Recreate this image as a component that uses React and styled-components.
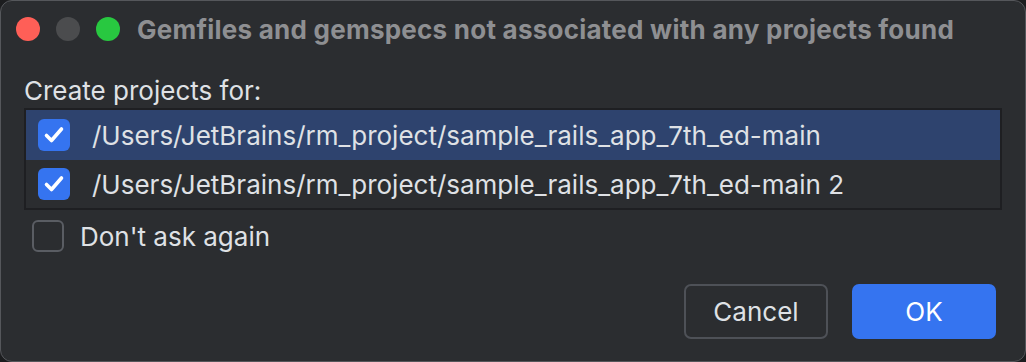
import React, { useState } from 'react'
import styled, { createGlobalStyle } from 'styled-components'

const GlobalStyle = createGlobalStyle`
    html, body {
        margin: 0;
        padding: 0;
        background: #1c1d1f;
    }
    body {
        font-family: Inter, "Noto Sans", "Liberation Sans", sans-serif;
    }
`;

const Window = styled.div`
    box-sizing: border-box;
    width: 1026px;
    height: 362px;
    background: #2b2d30;
    border: 1px solid #55575b;
    border-radius: 12px;
    display: flex;
    flex-flow: column nowrap;
    overflow: hidden;
`;

const TitleBar = styled.div`
    display: flex;
    align-items: center;
    height: 56px;
    padding: 0 0 0 15px;
`;

const Lights = styled.div`
    display: flex;
    gap: 16px;
    margin-right: 17px;
`;

const Light = styled.span`
    width: 24px;
    height: 24px;
    border-radius: 50%;
    background: ${props => props.color};
`;

const Title = styled.div`
    color: #8e8f92;
    font-size: 26px;
    font-weight: 700;
    letter-spacing: 0.24px;
    white-space: nowrap;
`;

const Body = styled.div`
    display: flex;
    flex-flow: column nowrap;
    padding: 19px 23px 0 23px;
`;

const Label = styled.div`
    color: #dfe1e5;
    font-size: 26px;
    line-height: 30px;
    margin-bottom: 2px;
`;

const List = styled.div`
    border: 2px solid #1e1f22;
    display: flex;
    flex-flow: column nowrap;
`;

const Row = styled.div`
    display: flex;
    align-items: center;
    height: ${props => props.selected ? 50 : 48}px;
    padding-left: 12px;
    background: ${props => props.selected ? '#2e436e' : 'transparent'};
    color: #dfe1e5;
    font-size: 26px;
    white-space: nowrap;
`;

const Box = styled.span`
    box-sizing: border-box;
    flex: none;
    width: 32px;
    height: 32px;
    border-radius: 6px;
    display: flex;
    align-items: center;
    justify-content: center;
    background: ${props => props.checked ? '#3574f0' : 'transparent'};
    border: ${props => props.checked ? 'none' : '2px solid #5a5d63'};
`;

const Path = styled.span`
    margin-left: 22px;
`;

const Option = styled.label`
    display: flex;
    align-items: center;
    margin: 10px 0 0 8px;
    color: #dfe1e5;
    font-size: 26px;
    cursor: pointer;
`;

const OptionText = styled.span`
    margin-left: 16px;
`;

const Footer = styled.div`
    display: flex;
    justify-content: flex-end;
    gap: 24px;
    padding: 32px 29px 0 0;
`;

const Button = styled.button`
    box-sizing: border-box;
    width: 144px;
    height: 55px;
    border-radius: 7px;
    font-family: inherit;
    font-size: 26px;
    color: ${props => props.primary ? '#ffffff' : '#dfe1e5'};
    background: ${props => props.primary ? '#3574f0' : 'transparent'};
    border: ${props => props.primary ? 'none' : '2px solid #4e5157'};
`;

function Check({ checked }) {
    return (
        <Box checked={checked}>
            {checked && (
                <svg width="26" height="26" viewBox="0 0 26 26">
                    <path d="M5.5 13.5 L10.5 18.5 L20.5 7" fill="none" stroke="#fff" strokeWidth="3.6" strokeLinecap="round" strokeLinejoin="round" />
                </svg>
            )}
        </Box>
    )
}

const projects = [
    '/Users/JetBrains/rm_project/sample_rails_app_7th_ed-main',
    '/Users/JetBrains/rm_project/sample_rails_app_7th_ed-main 2',
];

function App() {
    const [dontAsk, setDontAsk] = useState(false);

    return (
        <>
            <GlobalStyle />
            <Window>
                <TitleBar>
                    <Lights>
                        <Light color="#ff5f57" />
                        <Light color="#4b4c4e" />
                        <Light color="#28c840" />
                    </Lights>
                    <Title>Gemfiles and gemspecs not associated with any projects found</Title>
                </TitleBar>
                <Body>
                    <Label>Create projects for:</Label>
                    <List>
                        {projects.map((p, i) => (
                            <Row key={p} selected={i === 0}>
                                <Check checked />
                                <Path>{p}</Path>
                            </Row>
                        ))}
                    </List>
                    <Option onClick={() => setDontAsk(!dontAsk)}>
                        <Check checked={dontAsk} />
                        <OptionText>Don't ask again</OptionText>
                    </Option>
                </Body>
                <Footer>
                    <Button>Cancel</Button>
                    <Button primary>OK</Button>
                </Footer>
            </Window>
        </>
    )
}

export default App
